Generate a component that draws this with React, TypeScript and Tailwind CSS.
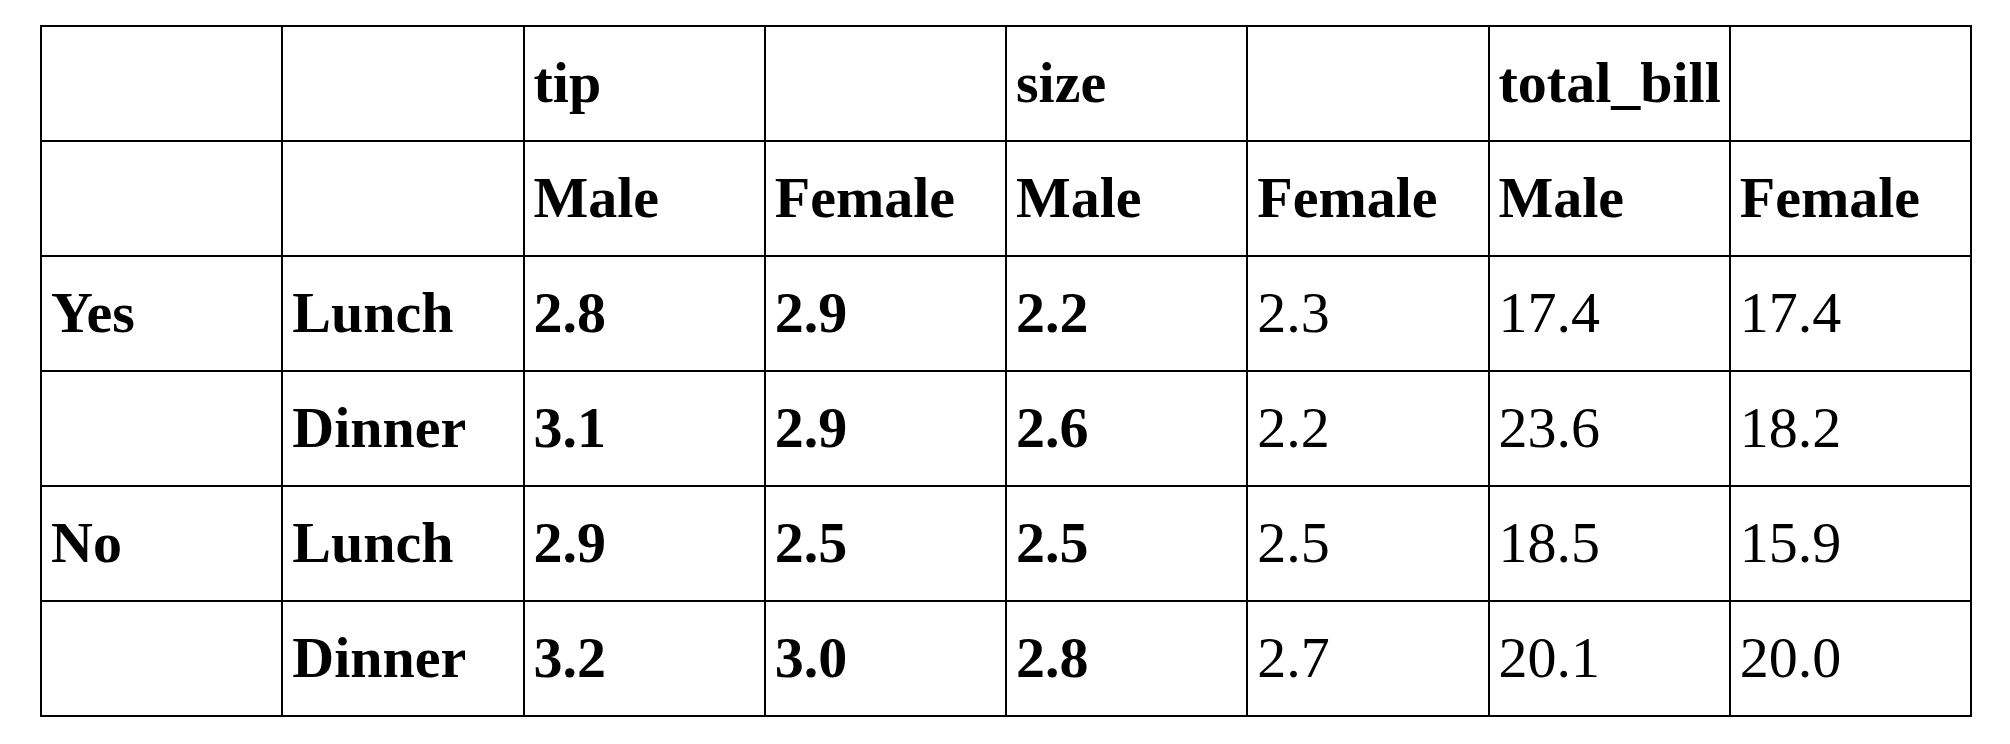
import React from "react";

const top1 = ["", "", "tip", "", "size", "", "total_bill", ""];
const top2 = ["", "", "Male", "Female", "Male", "Female", "Male", "Female"];
const rows = [
  ["Yes", "Lunch", "2.8", "2.9", "2.2", "2.3", "17.4", "17.4"],
  ["", "Dinner", "3.1", "2.9", "2.6", "2.2", "23.6", "18.2"],
  ["No", "Lunch", "2.9", "2.5", "2.5", "2.5", "18.5", "15.9"],
  ["", "Dinner", "3.2", "3.0", "2.8", "2.7", "20.1", "20.0"],
];

function Cell({ text, bold }: { text: string; bold: boolean }) {
  return (
    <div
      className={
        "h-[115px] border-r-2 border-b-2 border-black flex items-center pl-[9px] pb-[2px] text-[58px] leading-[66px] text-black " +
        (bold ? "font-bold" : "font-normal")
      }
    >
      {text}
    </div>
  );
}

export default function App() {
  return (
    <div className="w-[2010px] h-[744px] bg-white pt-[25px] pl-[40px]" style={{ fontFamily: '"Liberation Serif", "Times New Roman", serif' }}>
      <div className="w-[1932px] grid grid-cols-8 border-l-2 border-t-2 border-black">
        {top1.map((t, i) => (
          <Cell key={"a" + i} text={t} bold />
        ))}
        {top2.map((t, i) => (
          <Cell key={"b" + i} text={t} bold />
        ))}
        {rows.map((r, ri) =>
          r.map((t, ci) => <Cell key={ri + "-" + ci} text={t} bold={ci < 5} />)
        )}
      </div>
    </div>
  );
}
